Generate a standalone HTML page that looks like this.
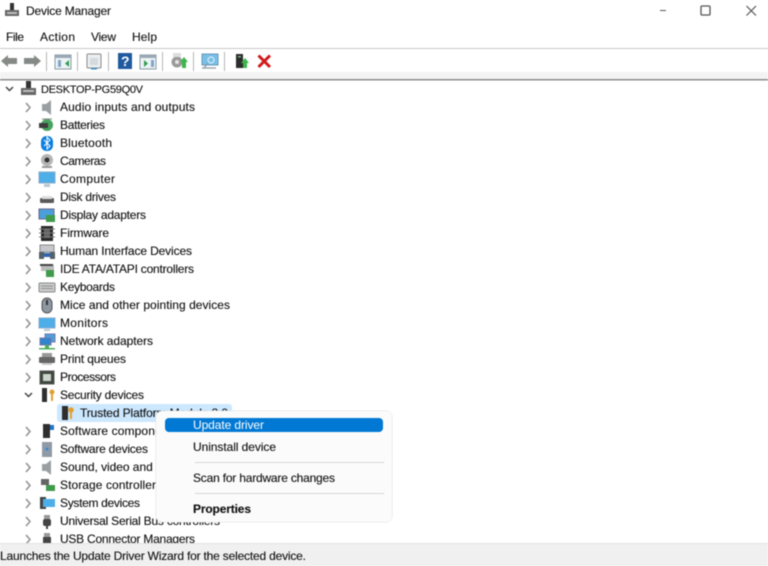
<!DOCTYPE html>
<html><head><meta charset="utf-8"><style>
html,body{margin:0;padding:0;background:#fff;width:768px;height:566px;overflow:hidden}
svg{display:block;filter:blur(.5px)}
text{font-family:"Liberation Sans",sans-serif;font-size:12px;fill:#111;stroke:#111;stroke-width:.12px}
.c{fill:none;stroke:#8f8f8f;stroke-width:1.500}
</style></head><body>
<svg width="768" height="566" viewBox="0 0 768 566" xmlns="http://www.w3.org/2000/svg">
<rect width="768" height="566" fill="#fff"/>
<!-- title -->
<g><rect x="10" y="3" width="4" height="7" fill="#333"/><rect x="5" y="10" width="14" height="6" fill="#666"/><rect x="7" y="12" width="10" height="2" fill="#bbb"/></g>
<text x="26" y="15" textLength="85">Device Manager</text>
<rect x="660" y="10" width="6" height="1" fill="#555"/>
<rect x="701" y="6" width="9" height="9" rx="1" fill="none" stroke="#555" stroke-width="1.300"/>
<path d="M746.500 6 L756 15.500 M756 6 L746.500 15.500" stroke="#555" stroke-width="1.200" fill="none"/>
<!-- menu -->
<text x="6" y="41" textLength="18">File</text>
<text x="40" y="41" textLength="35">Action</text>
<text x="91" y="41" textLength="25">View</text>
<text x="132" y="41" textLength="25">Help</text>
<rect y="48" width="768" height="1" fill="#c8c8c8"/>
<!-- toolbar -->
<rect y="72" width="768" height="7" fill="#f3f3f3"/>
<rect y="79" width="768" height="1.500" fill="#8c8c8c"/>
<path d="M1 61 L8 55 V58 H17 V64 H8 V67 Z" fill="#858a87"/>
<path d="M41 61 L34 55 V58 H24 V64 H34 V67 Z" fill="#858a87"/>
<rect x="46" y="52" width="1" height="19" fill="#b5b5b5"/><rect x="77" y="52" width="1" height="19" fill="#b5b5b5"/><rect x="108" y="52" width="1" height="19" fill="#b5b5b5"/><rect x="162" y="52" width="1" height="19" fill="#b5b5b5"/><rect x="193" y="52" width="1" height="19" fill="#b5b5b5"/><rect x="224" y="52" width="1" height="19" fill="#b5b5b5"/>
<rect x="55" y="55" width="16" height="14" fill="#eef3f6" stroke="#8899a5"/><rect x="55" y="55" width="16" height="3" fill="#9aa9b5"/><rect x="58" y="60" width="3" height="7" fill="#7fa6c8"/><path d="M69 60 L65 63.500 L69 67 Z" fill="#2f9e4e"/>
<rect x="87" y="54" width="14" height="14" rx="1" fill="#eceff1" stroke="#8a8a8a"/><rect x="90" y="58" width="8" height="7" fill="#d4dadf"/><rect x="91" y="68" width="6" height="1.500" fill="#3d8fd0"/>
<rect x="118" y="53" width="14" height="16" fill="#1f5a9e"/><text x="121" y="66" style="font-size:14px;font-weight:bold;fill:#fff;stroke:none">?</text>
<rect x="140" y="55" width="16" height="14" fill="#eef3f6" stroke="#8899a5"/><rect x="140" y="55" width="16" height="3" fill="#9aa9b5"/><path d="M144 60 L148 63.500 L144 67 Z" fill="#2f9e4e"/><rect x="151" y="60" width="3" height="7" fill="#7fa6c8"/>
<circle cx="177" cy="62" r="5.500" fill="#9a9a9a"/><circle cx="177" cy="62" r="2" fill="#e5e5e5"/><rect x="173" y="53" width="8" height="4" fill="#ddd"/><path d="M184 57 L188 62 H186 V68 H182 V62 H180 Z" fill="#3cb54a"/>
<rect x="202" y="54" width="16" height="11" fill="#78bfe8" stroke="#6a98b8"/><circle cx="211" cy="60" r="3" fill="none" stroke="#e6f3fb"/><path d="M208 63 L204 68 M202 68 H216" stroke="#8a9aa5" stroke-width="1.200"/>
<rect x="236" y="54" width="7" height="14" fill="#2c2c2c"/><rect x="238" y="56" width="3" height="1.500" fill="#7bb27b"/><path d="M245 58 L249 63 H247 V68 H243 V63 H241 Z" fill="#3cb54a"/>
<path d="M258.500 55.500 L270 67 M270 55.500 L258.500 67" stroke="#cf1c1c" stroke-width="3" fill="none"/>
<!-- tree chevrons -->
<path d="M6 87 L9.500 90.500 L13 87" fill="none" stroke="#444" stroke-width="1.500"/>
<path class="c" d="M26 103 L30 107.500 L26 112 M26 121 L30 125.500 L26 130 M26 139 L30 143.500 L26 148 M26 157 L30 161.500 L26 166 M26 175 L30 179.500 L26 184 M26 193 L30 197.500 L26 202 M26 211 L30 215.500 L26 220 M26 229 L30 233.500 L26 238 M26 247 L30 251.500 L26 256 M26 265 L30 269.500 L26 274 M26 283 L30 287.500 L26 292 M26 301 L30 305.500 L26 310 M26 319 L30 323.500 L26 328 M26 337 L30 341.500 L26 346 M26 355 L30 359.500 L26 364 M26 373 L30 377.500 L26 382 M26 427 L30 431.500 L26 436 M26 445 L30 449.500 L26 454 M26 463 L30 467.500 L26 472 M26 481 L30 485.500 L26 490 M26 499 L30 503.500 L26 508 M26 517 L30 521.500 L26 526 M26 535 L30 539.500 L26 544"/>
<path d="M25 393 L28.500 396.500 L32 393" fill="none" stroke="#444" stroke-width="1.500"/>
<!-- tree icons -->
<g><rect x="26" y="81" width="5" height="7" fill="#333"/><rect x="21" y="88" width="15" height="7" fill="#666"/><rect x="23" y="90" width="11" height="2" fill="#bbb"/></g>
<path d="M42 104 H46 L51 100 V115 L46 111 H42 Z" fill="#9aa0a2"/>
<circle cx="47" cy="125" r="6" fill="#46a35c"/><rect x="39" y="123" width="9" height="5" fill="#3d3d3d"/><path d="M42 119 H52" stroke="#888"/>
<rect x="41" y="136" width="12" height="15" rx="5.500" fill="#0a7fe0"/><path d="M44 140 L50 146 L47 149 V137 L50 140 L44 146" stroke="#fff" fill="none"/>
<circle cx="47" cy="160" r="6" fill="#b5b5b5"/><circle cx="47" cy="160" r="2.500" fill="#333"/><rect x="42" y="166" width="10" height="2" fill="#999"/>
<rect x="39" y="172" width="16" height="11" fill="#4eaee8" stroke="#88aacc"/><rect x="44" y="184" width="6" height="3" fill="#b9c6d0"/>
<rect x="40" y="198" width="14" height="5" rx="1" fill="#5a5a5a"/><rect x="42" y="196" width="10" height="3" fill="#ddd"/>
<rect x="39" y="209" width="15" height="10" fill="#4b9fdc" stroke="#668"/><rect x="46" y="215" width="9" height="7" fill="#3f9a4b"/>
<rect x="41" y="226" width="12" height="15" fill="#2a2a2a"/><rect x="44" y="229" width="6" height="9" fill="#666"/><path d="M39 229 H55 M39 233 H55 M39 237 H55" stroke="#777"/>
<rect x="40" y="245" width="14" height="7" fill="#c4c8cc" stroke="#888"/><path d="M39 252 h5 v7 h-5 z M50 252 h5 v7 h-5 z" fill="#55606c"/><rect x="44" y="253" width="6" height="4" fill="#2e66b0"/>
<rect x="41" y="265" width="13" height="6" fill="#bbb"/><rect x="40" y="264" width="13" height="2" fill="#444"/><rect x="46" y="270" width="8" height="7" fill="#3f9a4b"/>
<rect x="39" y="283" width="16" height="9" rx="1" fill="#c9cbcd" stroke="#8a8a8a"/><path d="M41 286 H53 M41 288.500 H53" stroke="#8f8f8f"/>
<rect x="42" y="298" width="10" height="15" rx="5" fill="#8d97a2" stroke="#555"/><rect x="46" y="300" width="2" height="5" fill="#333"/>
<rect x="39" y="318" width="16" height="10" fill="#4eaee8" stroke="#88aacc"/><rect x="44" y="329" width="6" height="2" fill="#b9c6d0"/>
<rect x="45" y="334" width="10" height="8" fill="#4b9fdc" stroke="#77a"/><rect x="40" y="338" width="11" height="7" fill="#2f85d0" stroke="#77a"/><rect x="39" y="348" width="16" height="1.500" fill="#4bb05a"/><rect x="45" y="345" width="4" height="3" fill="#4bb05a"/>
<rect x="42" y="353" width="10" height="4" fill="#999"/><rect x="39" y="357" width="16" height="6" rx="1" fill="#666"/><rect x="42" y="363" width="10" height="2" fill="#ccc"/>
<rect x="40" y="371" width="14" height="13" fill="#3d4a3d" stroke="#555"/><rect x="43" y="374" width="8" height="7" fill="#cfd3cf"/>
<rect x="42" y="388" width="5" height="14" fill="#2e2e2e"/><circle cx="52" cy="392" r="2.500" fill="#e0a030"/><rect x="51" y="394" width="2" height="7" fill="#e0a030"/>
<!-- selected row -->
<rect x="57" y="404" width="175" height="18" rx="3" fill="#cce8ff"/>
<rect x="62" y="406" width="6" height="14" fill="#2e2e2e"/><circle cx="71" cy="410" r="2.800" fill="#e0a030"/><rect x="70" y="412" width="2" height="7" fill="#e0a030"/>
<rect x="43" y="424" width="7" height="14" fill="#2e2e2e"/><rect x="50" y="425" width="4" height="5" fill="#2277cc"/>
<rect x="42" y="442" width="10" height="15" fill="#8e9aa6"/><circle cx="47" cy="449" r="1.500" fill="#3b8bd0"/>
<path d="M42 464 H46 L51 460 V475 L46 471 H42 Z" fill="#9aa0a2"/>
<rect x="41" y="479" width="8" height="6" fill="#666"/><rect x="46" y="485" width="9" height="6" fill="#3f9a4b"/>
<rect x="40" y="497" width="6" height="12" fill="#444"/><rect x="43" y="499" width="12" height="8" fill="#4eaee8"/>
<rect x="44" y="515" width="6" height="4" fill="#999"/><rect x="43" y="519" width="8" height="7" rx="2" fill="#444"/><rect x="46" y="526" width="2" height="3" fill="#444"/>
<rect x="44" y="533" width="6" height="4" fill="#999"/><rect x="43" y="537" width="8" height="6" fill="#444"/>
<!-- tree labels -->
<text x="41" y="93" textLength="102" style="font-size:11px">DESKTOP-PG59Q0V</text>
<text x="60" y="111" textLength="135">Audio inputs and outputs</text>
<text x="60" y="129" textLength="45">Batteries</text>
<text x="60" y="147" textLength="52">Bluetooth</text>
<text x="60" y="165" textLength="46">Cameras</text>
<text x="60" y="183" textLength="55">Computer</text>
<text x="60" y="201" textLength="56">Disk drives</text>
<text x="60" y="219" textLength="86">Display adapters</text>
<text x="60" y="237" textLength="49">Firmware</text>
<text x="60" y="255" textLength="132">Human Interface Devices</text>
<text x="60" y="273" textLength="134">IDE ATA/ATAPI controllers</text>
<text x="60" y="291" textLength="55">Keyboards</text>
<text x="60" y="309" textLength="170">Mice and other pointing devices</text>
<text x="60" y="327" textLength="48">Monitors</text>
<text x="60" y="345" textLength="93">Network adapters</text>
<text x="60" y="363" textLength="66">Print queues</text>
<text x="60" y="381" textLength="56">Processors</text>
<text x="60" y="399" textLength="84">Security devices</text>
<text x="80" y="417" textLength="148">Trusted Platform Module 2.0</text>
<text x="60" y="435" textLength="118">Software components</text>
<text x="60" y="453" textLength="88">Software devices</text>
<text x="60" y="471" textLength="184">Sound, video and game controllers</text>
<text x="60" y="489" textLength="102">Storage controllers</text>
<text x="60" y="507" textLength="80">System devices</text>
<text x="60" y="525" textLength="160">Universal Serial Bus controllers</text>
<text x="60" y="543" textLength="135">USB Connector Managers</text>
<!-- status bar -->
<rect y="543" width="768" height="23" fill="#f0f0f0"/>
<rect y="543" width="768" height="1" fill="#e2e2e2"/>
<text x="0" y="560" textLength="306">Launches the Update Driver Wizard for the selected device.</text>
<!-- context menu -->
<rect x="155.500" y="410.500" width="237" height="112" rx="7" fill="#d6d6d6" opacity=".8"/>
<rect x="156" y="411" width="236" height="111" rx="6" fill="#fbfbfb"/>
<rect x="165" y="418" width="218" height="14" rx="4" fill="#0078d4"/>
<text x="193" y="429" textLength="71" style="fill:#fff;stroke:none">Update driver</text>
<text x="193" y="451" textLength="83">Uninstall device</text>
<rect x="195" y="462" width="189" height="1" fill="#d6d6d6"/>
<text x="193" y="482" textLength="142">Scan for hardware changes</text>
<rect x="195" y="493" width="189" height="1" fill="#d6d6d6"/>
<text x="193" y="513" textLength="58" style="font-weight:bold">Properties</text>
</svg>
</body></html>
